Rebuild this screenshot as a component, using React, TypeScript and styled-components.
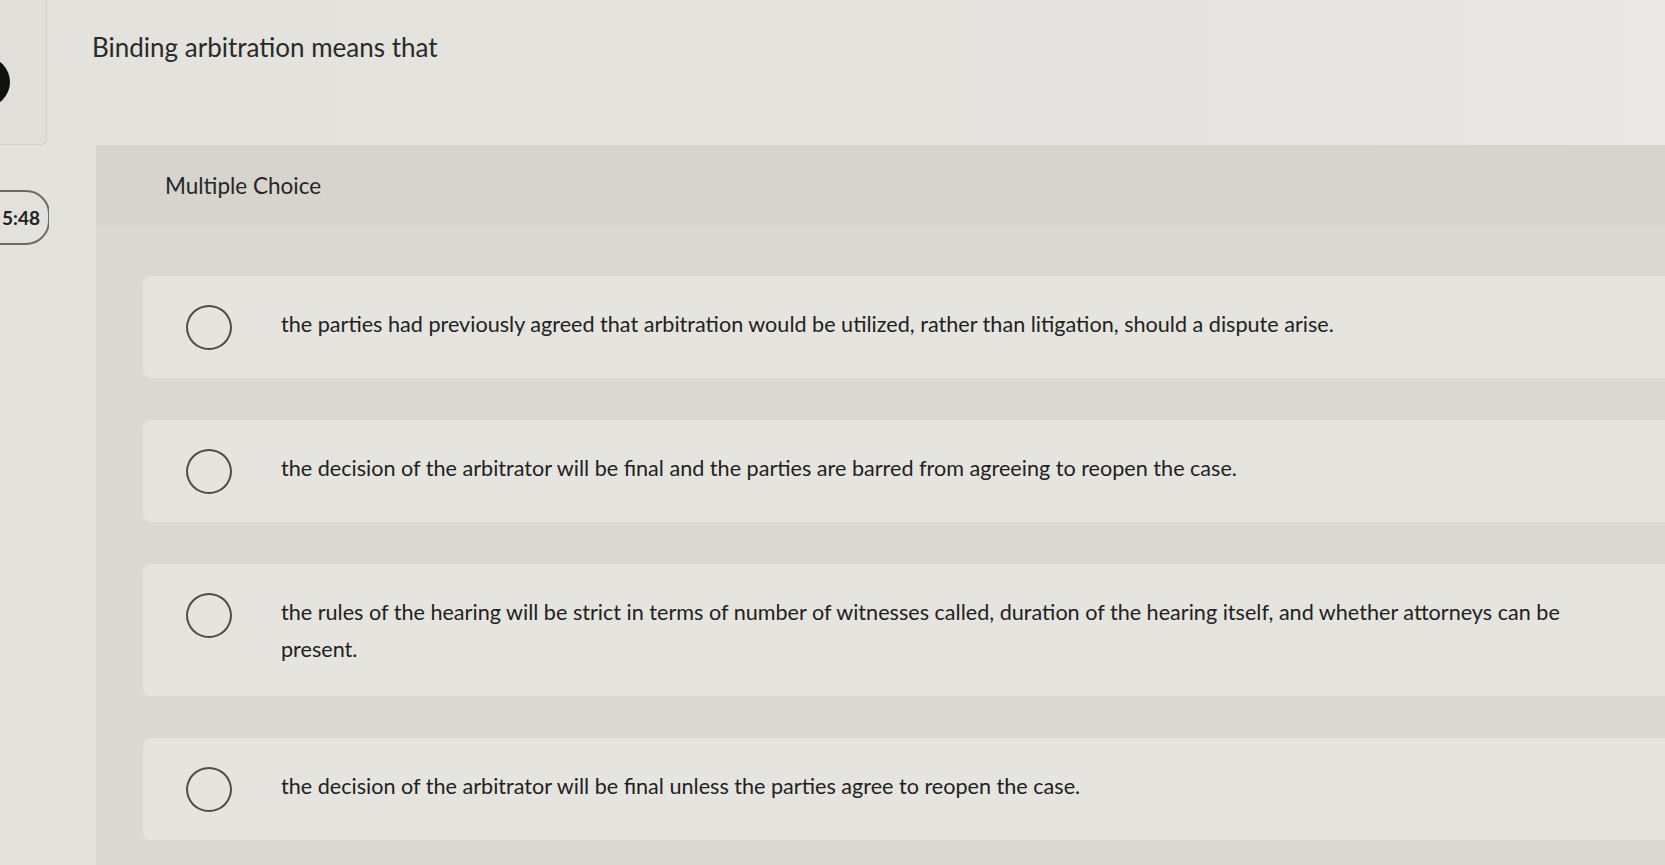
import React from "react";
import styled, { createGlobalStyle } from "styled-components";

const GlobalStyle = createGlobalStyle`
  html, body {
    margin: 0;
    padding: 0;
    background: #e4e2dd;
    overflow: hidden;
  }
  body {
    font-family: "Lato", "Open Sans", sans-serif;
    color: #2c2c2c;
  }
`;

const Page = styled.div`
  display: flex;
  width: 1665px;
  height: 865px;
  overflow: hidden;
  background: #e4e2dd;
`;

const LeftRail = styled.div`
  width: 49px;
  flex-shrink: 0;
  display: flex;
  flex-direction: column;
  overflow: hidden;
`;

const SideCard = styled.div`
  position: relative;
  width: 47px;
  height: 145px;
  background: #e1dfda;
  border-right: 1px solid #d3d0ca;
  border-bottom: 1px solid #d3d0ca;
  border-bottom-right-radius: 6px;
  box-sizing: border-box;
  overflow: hidden;
`;

// dark handle peeking in from the left edge
const Knob = styled.span`
  position: absolute;
  left: -40px;
  top: 57px;
  width: 50px;
  height: 50px;
  border-radius: 50%;
  background: #111;
`;

const Timer = styled.div`
  margin-top: 45px;
  margin-left: -26px;
  width: 76px;
  height: 55px;
  border: 2px solid #6a6a67;
  border-radius: 24px;
  box-sizing: border-box;
  display: flex;
  align-items: center;
  justify-content: flex-end;
  padding-right: 8px;
  font-size: 19px;
  font-weight: 700;
  color: #222;
  background: #e3e1dc;
`;

const Main = styled.div`
  flex: 1;
  display: flex;
  flex-direction: column;
  margin-left: 47px;
  min-width: 0;
`;

const QuestionArea = styled.div`
  height: 145px;
  box-sizing: border-box;
  padding-top: 31px;
  margin-left: -4px;
  background: linear-gradient(90deg, #e4e2dd 0%, #e6e4e0 70%, #ebe9e6 100%);
`;

const Question = styled.h1`
  margin: 0;
  font-size: 26px;
  line-height: 32px;
  font-weight: 400;
  color: #2a2a2a;
`;

const ChoiceBand = styled.div`
  height: 80px;
  display: flex;
  align-items: center;
  padding-left: 69px;
  background: #d7d4ce;
  font-size: 22.5px;
  color: #262626;
`;

const OptionsPanel = styled.div`
  flex: 1;
  display: flex;
  flex-direction: column;
  gap: 42px;
  padding: 51px 0 0 47px;
  background: #dcd9d3;
`;

const OptionCard = styled.label`
  display: flex;
  align-items: flex-start;
  gap: 49px;
  padding: 32px 30px 28px 43px;
  background: #e6e4df;
  border-radius: 8px 0 0 8px;
  cursor: pointer;
`;

const Radio = styled.span`
  flex-shrink: 0;
  width: 46px;
  height: 45px;
  margin-top: -3px;
  border: 2px solid #4d4d4b;
  border-radius: 50%;
  box-sizing: border-box;
`;

const OptionText = styled.span`
  font-size: 21.6px;
  line-height: 37px;
  margin-top: -2px;
  color: #222;
`;

const options = [
  "the parties had previously agreed that arbitration would be utilized, rather than litigation, should a dispute arise.",
  "the decision of the arbitrator will be final and the parties are barred from agreeing to reopen the case.",
  "the rules of the hearing will be strict in terms of number of witnesses called, duration of the hearing itself, and whether attorneys can be present.",
  "the decision of the arbitrator will be final unless the parties agree to reopen the case.",
];

export default function App() {
  return (
    <>
      <GlobalStyle />
      <Page>
        <LeftRail>
          <SideCard>
            <Knob />
          </SideCard>
          <Timer>5:48</Timer>
        </LeftRail>
        <Main>
          <QuestionArea>
            <Question>Binding arbitration means that</Question>
          </QuestionArea>
          <ChoiceBand>Multiple Choice</ChoiceBand>
          <OptionsPanel>
            {options.map((text, i) => (
              <OptionCard key={i}>
                <Radio />
                <OptionText>{text}</OptionText>
              </OptionCard>
            ))}
          </OptionsPanel>
        </Main>
      </Page>
    </>
  );
}
